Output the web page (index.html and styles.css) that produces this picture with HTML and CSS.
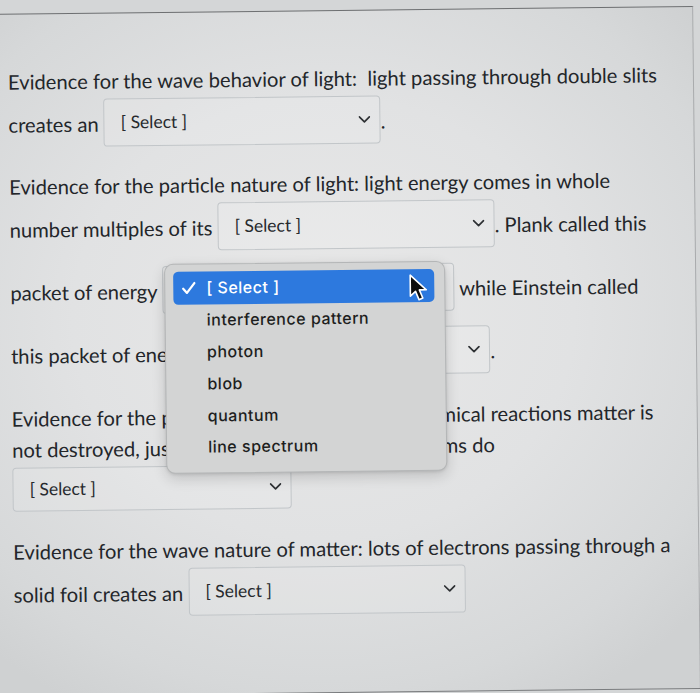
FILE: index.html
```html
<!DOCTYPE html>
<html lang="en">
<head>
<meta charset="utf-8">
<title>Quiz</title>
<link rel="stylesheet" href="styles.css">
</head>
<body>
<div class="sheet">
  <div class="content">
    <p class="q q1">Evidence for the wave behavior of light:&nbsp; light passing through double slits<br>creates an <span class="sel w277"><span class="sel-text">[ Select ]</span><svg class="chev" viewBox="0 0 12 8"><path d="M1 1.2 L6 6.2 L11 1.2"/></svg></span>.</p>

    <p class="q q2">Evidence for the particle nature of light: light energy comes in whole<br>number multiples of its <span class="sel w277"><span class="sel-text">[ Select ]</span><svg class="chev" viewBox="0 0 12 8"><path d="M1 1.2 L6 6.2 L11 1.2"/></svg></span>. Plank called this<br>packet of energy <span class="sel w292 open"><span class="sel-text">[ Select ]</span><svg class="chev" viewBox="0 0 12 8"><path d="M1 1.2 L6 6.2 L11 1.2"/></svg>
        <span class="menu">
          <span class="opt active"><svg class="check" viewBox="0 0 16 16"><path d="M2 8.6 L6 13 L14 2.6"/></svg>[ Select ]</span>
          <span class="opt">interference pattern</span>
          <span class="opt">photon</span>
          <span class="opt">blob</span>
          <span class="opt">quantum</span>
          <span class="opt">line spectrum</span>
          <svg class="cursor" viewBox="0 0 22 30"><path d="M2 2 L2 23 L7.2 18.2 L10.6 26.6 L14.4 25 L11 16.8 L18 16.8 Z"/></svg>
        </span>
      </span> while Einstein called<br>this packet of energy <span class="sel w290"><span class="sel-text">[ Select ]</span><svg class="chev" viewBox="0 0 12 8"><path d="M1 1.2 L6 6.2 L11 1.2"/></svg></span>.</p>

    <p class="q q3">Evidence for the particle nature of matter: in chemical reactions matter is<br>not destroyed, just rearranged, which is what atoms do<br><span class="sel w279 short"><span class="sel-text">[ Select ]</span><svg class="chev" viewBox="0 0 12 8"><path d="M1 1.2 L6 6.2 L11 1.2"/></svg></span></p>

    <p class="q q4">Evidence for the wave nature of matter: lots of electrons passing through a<br>solid foil creates an <span class="sel w277"><span class="sel-text">[ Select ]</span><svg class="chev" viewBox="0 0 12 8"><path d="M1 1.2 L6 6.2 L11 1.2"/></svg></span></p>
  </div>
</div>
</body>
</html>
```
FILE: styles.css
```css
html, body {
  margin: 0;
  padding: 0;
}
body {
  width: 700px;
  height: 693px;
  overflow: hidden;
  background: #d4d6d7;
  font-family: "Lato", "Liberation Sans", sans-serif;
}
.sheet {
  box-sizing: border-box;
  margin: 10px 0 0 -20px;
  width: 717px;
  height: 683px;
  border-top: 1.5px solid #6d6f71;
  border-right: 1px solid #a9abad;
  border-bottom: 1.5px solid #7a7c7e;
  background: radial-gradient(ellipse 70% 65% at 48% 45%, #e8e8e8 0%, #e1e2e3 50%, #d6d8d9 85%, #cfd1d2 100%);
  transform: rotate(-0.65deg);
  transform-origin: 358px 340px;
  padding: 52px 0 0 31px;
}
.content {
  color: #23262a;
}
.q {
  margin: 0 0 11px 0;
  font-size: 20.2px;
  line-height: 31px;
  white-space: nowrap;
}
.q2 { margin-bottom: 12px; }
.q3 { margin-bottom: 12px; }

.sel {
  display: inline-flex;
  align-items: center;
  box-sizing: border-box;
  height: 48px;
  margin: 2px 0 13px 0;
  padding: 0 9px 0 16px;
  vertical-align: 3px;
  border: 1px solid #c2c6c9;
  border-radius: 4px;
  background: rgba(255, 255, 255, 0.12);
  position: relative;
  line-height: 20px;
}
.sel.short {
  height: 44px;
  margin-top: 2px;
}
.w277 { width: 277px; }
.w279 { width: 279px; }
.w290 { width: 290px; }
.w292 { width: 292px; }
.sel-text {
  flex: 1;
  font-size: 17.5px;
  color: #272a2e;
}
.chev {
  width: 12px;
  height: 8px;
  fill: none;
  stroke: #2e3134;
  stroke-width: 1.7;
  stroke-linecap: round;
  stroke-linejoin: round;
}

.menu {
  position: absolute;
  top: -3px;
  left: 1px;
  width: 281px;
  height: 210px;
  box-sizing: border-box;
  padding: 7px 10px 10px 8px;
  display: flex;
  flex-direction: column;
  background: #d3d4d4;
  border: 1px solid #b4b6b7;
  border-radius: 9px;
  box-shadow: 0 5px 14px rgba(0, 0, 0, 0.16), 0 1px 3px rgba(0, 0, 0, 0.1);
  z-index: 5;
  font-family: "Inter", "Noto Sans", sans-serif;
  font-weight: 500;
  font-size: 16px;
  letter-spacing: 0.5px;
  color: #1d1e20;
}
.opt {
  display: flex;
  align-items: center;
  height: 32px;
  padding-left: 33px;
  border-radius: 5px;
  white-space: nowrap;
}
.opt.active {
  height: 33px;
  padding-left: 8px;
  background: #2d79de;
  color: #ffffff;
}
.check {
  width: 15px;
  height: 15px;
  margin-right: 10px;
  fill: none;
  stroke: #ffffff;
  stroke-width: 2.4;
  stroke-linecap: round;
  stroke-linejoin: round;
}
.cursor {
  position: absolute;
  left: 243px;
  top: 11px;
  width: 22px;
  height: 30px;
  fill: #0d0d0d;
  stroke: #ffffff;
  stroke-width: 1.6;
  stroke-linejoin: round;
}
```
